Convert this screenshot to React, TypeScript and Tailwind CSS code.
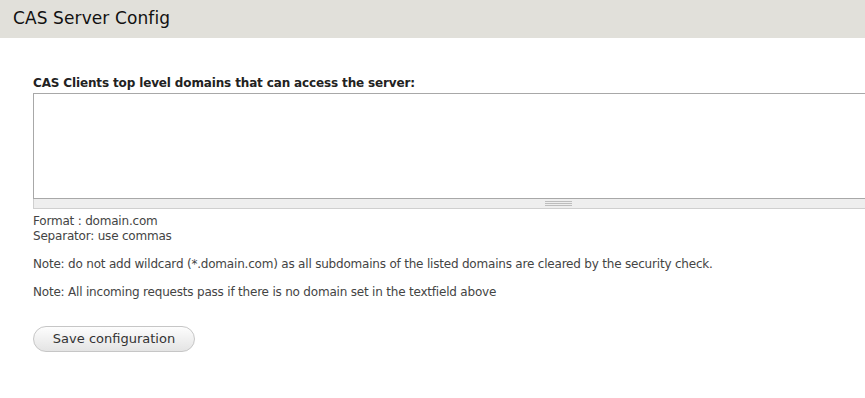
export default function App() {
  return (
    <div className="min-h-[398px] w-[865px] overflow-hidden bg-white font-['DejaVu_Sans',sans-serif] text-[#333]">
      <div className="flex h-[38px] items-center bg-[#e1e0da] px-[13px]">
        <h1 className="text-[17px] tracking-[0.1px] text-[#111]">CAS Server Config</h1>
      </div>

      <form className="pl-[33px] pt-[37px]">
        <label className="block text-[12px] font-bold leading-[16px] tracking-[-0.14px] text-[#222]">
          CAS Clients top level domains that can access the server:
        </label>
        <div className="mt-[2px] w-[1050px]">
          <textarea className="block h-[106px] w-full resize-none border border-[#a8a8a8] bg-white outline-none" />
          <div className="flex h-[10px] items-center justify-center border border-t-0 border-[#cfcfcf] bg-[#eeeeee]">
            <div className="flex w-[27px] flex-col gap-[1px]">
              <div className="h-px bg-[#bdbdbd]" />
              <div className="h-px bg-[#bdbdbd]" />
              <div className="h-px bg-[#bdbdbd]" />
            </div>
          </div>
        </div>

        <div className="mt-[5px] text-[12px] leading-[15px] tracking-[-0.2px] text-[#444]">
          <div>Format : domain.com</div>
          <div>Separator: use commas</div>
        </div>
        <p className="mt-[13px] text-[12px] leading-[15px] tracking-[-0.2px] text-[#444]">
          Note: do not add wildcard (*.domain.com) as all subdomains of the listed domains are cleared by the security check.
        </p>
        <p className="mt-[13px] text-[12px] leading-[15px] tracking-[-0.2px] text-[#444]">
          Note: All incoming requests pass if there is no domain set in the textfield above
        </p>

        <button
          type="button"
          className="mt-[26px] h-[26px] w-[162px] rounded-full border border-[#c6c6c6] bg-gradient-to-b from-[#fdfdfd] to-[#e4e4e4] text-[13px] text-[#333]"
        >
          Save configuration
        </button>
      </form>
    </div>
  )
}
